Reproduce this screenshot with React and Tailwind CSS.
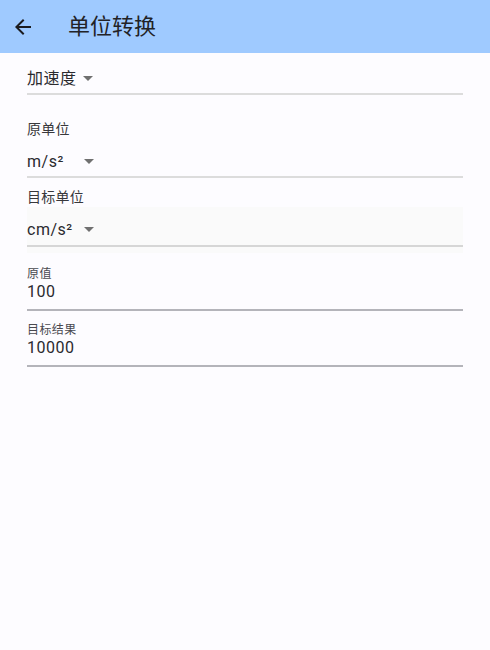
export default function App() {
  const font = { fontFamily: 'Roboto, "Noto Sans CJK SC", sans-serif' };

  const Caret = () => (
    <svg viewBox="0 0 10 5" className="h-[5px] w-[10px]" aria-hidden="true">
      <path d="M0 0h10L5 5z" fill="#707070" />
    </svg>
  );

  return (
    <div style={font} className="min-h-[650px] w-[490px] bg-[#fdfcff] text-[#1b1b1f]">
      <header className="flex h-[53px] items-center bg-[#9fcaff]">
        <svg viewBox="0 0 24 24" className="ml-[11px] h-6 w-6" aria-hidden="true">
          <path
            d="M20 11H7.83l5.59-5.59L12 4l-8 8 8 8 1.41-1.41L7.83 13H20v-2z"
            fill="#1b1b1f"
          />
        </svg>
        <h1 className="ml-[33px] text-[22px] leading-7 text-[#222226]">单位转换</h1>
      </header>

      <main className="px-[27px]">
        <div className="mt-[13px] flex h-[29px] items-center border-b-2 border-[#dcdcdc] pb-[2px] text-base tracking-[0.5px] text-[#2a2a2e]">
          <span className="w-[56px]">加速度</span>
          <Caret />
        </div>

        <div className="mt-[24px] text-sm leading-5 tracking-[0.25px] text-[#38383c]">原单位</div>
        <div className="mt-[8px] flex h-[31px] items-center border-b-2 border-[#dcdcdc] text-base tracking-[0.5px] text-[#2a2a2e]">
          <span className="w-[57px]">m/s²</span>
          <Caret />
        </div>

        <div className="mt-[9px] text-sm leading-5 tracking-[0.25px] text-[#38383c]">目标单位</div>
        <div className="bg-[#fafafa] pb-[6px] pt-[7px]">
          <div className="flex h-[33px] items-center border-b-2 border-[#d6d6d6] text-base tracking-[0.5px] text-[#2a2a2e]">
            <span className="w-[57px]">cm/s²</span>
            <Caret />
          </div>
        </div>

        <div className="mt-[13px] border-b-2 border-[#b4b4ba] pb-[8px]">
          <div className="text-xs leading-4 tracking-[0.4px] text-[#4a4a50]">原值</div>
          <div className="text-base leading-[19px] tracking-[0.5px] text-[#2a2a2e]">100</div>
        </div>

        <div className="mt-[11px] border-b-2 border-[#b4b4ba] pb-[8px]">
          <div className="text-xs leading-4 tracking-[0.4px] text-[#4a4a50]">目标结果</div>
          <div className="text-base leading-[19px] tracking-[0.5px] text-[#2a2a2e]">10000</div>
        </div>
      </main>
    </div>
  );
}
